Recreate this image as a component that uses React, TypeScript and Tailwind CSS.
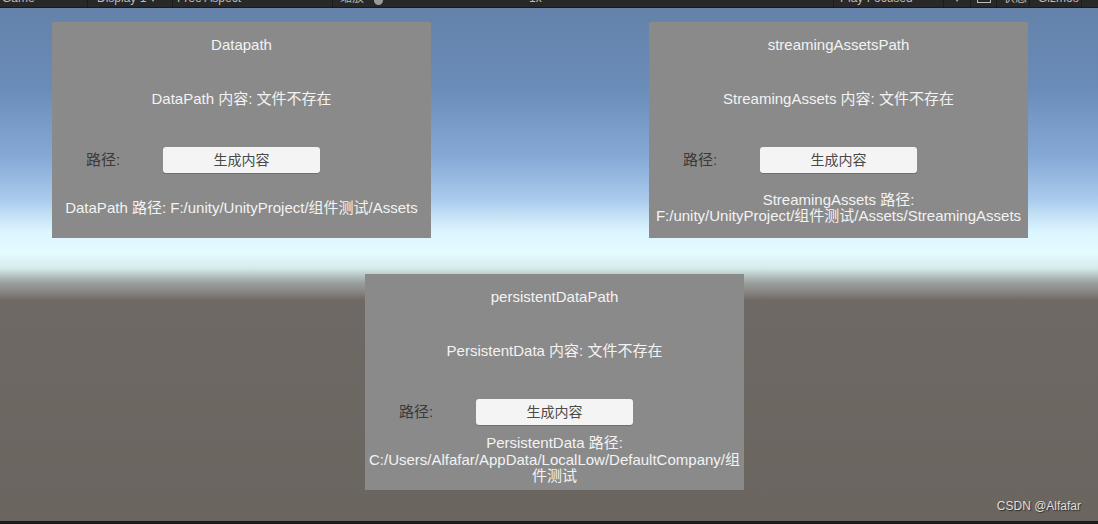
import React from 'react'

interface PathPanel {
  title: string
  content: string
  path: string[]
}

// Path lines are split the way the in-game text box wraps them
const panels: PathPanel[] = [
  {
    title: 'Datapath',
    content: 'DataPath 内容: 文件不存在',
    path: ['DataPath 路径: F:/unity/UnityProject/组件测试/Assets'],
  },
  {
    title: 'streamingAssetsPath',
    content: 'StreamingAssets 内容: 文件不存在',
    path: ['StreamingAssets 路径:', 'F:/unity/UnityProject/组件测试/Assets/StreamingAssets'],
  },
  {
    title: 'persistentDataPath',
    content: 'PersistentData 内容: 文件不存在',
    path: ['PersistentData 路径:', 'C:/Users/Alfafar/AppData/LocalLow/DefaultCompany/组', '件测试'],
  },
]

function Panel({ panel }: { panel: PathPanel }) {
  return (
    <div className="w-[379px] h-[216px] bg-[#8a8a8a] flex flex-col text-[15px] text-[#f3f3f3]">
      <div className="h-[46px] flex items-center justify-center">{panel.title}</div>
      <div className="h-[62px] flex items-center justify-center">{panel.content}</div>
      {/* Label + button row */}
      <div className="mt-[17px] h-[26px] flex items-center">
        <span className="ml-[34px] w-[77px] text-[#3a3a3a]">路径:</span>
        <button className="w-[157px] h-[26px] bg-[#f4f4f4] rounded-[3px] shadow-[0_1px_0_#6f6f6f] text-[#4a4a4a] text-[14px]">
          生成内容
        </button>
      </div>
      <div className="mt-[5px] flex-1 flex flex-col items-center justify-center leading-[16.5px] whitespace-nowrap">
        {panel.path.map((line, i) => (
          <span key={i}>{line}</span>
        ))}
      </div>
    </div>
  )
}

export default function App() {
  return (
    <div className="w-[1098px] h-[524px] flex flex-col overflow-hidden font-['Liberation_Sans','Noto_Sans_CJK_SC',sans-serif]">
      {/* Editor toolbar, mostly cut off */}
      <div className="h-[8px] bg-[#282828] border-b border-[#191919] overflow-hidden flex text-[12px] leading-[12px] text-[#bcbcbc]">
        <div className="w-[88px] border-r border-[#1b1b1b] pl-[2px]"><div className="-mt-[8px]">Game</div></div>
        <div className="w-[85px] border-r border-[#1b1b1b] pl-[9px]"><div className="-mt-[8px]">Display 1 ▾</div></div>
        <div className="w-[160px] border-r border-[#1b1b1b] pl-[4px]"><div className="-mt-[8px]">Free Aspect</div></div>
        <div className="w-[501px] border-r border-[#1b1b1b] pl-[7px] flex">
          <div className="-mt-[8px]">缩放</div>
          <div className="ml-[10px] -mt-[4px] w-[9px] h-[9px] rounded-full bg-[#9a9a9a]" />
          <div className="ml-[146px] -mt-[8px]">1x</div>
        </div>
        <div className="w-[110px] border-r border-[#1b1b1b] pl-[6px]"><div className="-mt-[8px]">Play Focused</div></div>
        <div className="w-[27px] border-r border-[#1b1b1b] pl-[10px]"><div className="-mt-[8px]">▾</div></div>
        <div className="w-[26px] border-r border-[#1b1b1b] flex justify-center">
          <div className="-mt-[6px] w-[14px] h-[9px] border border-[#bcbcbc]" />
        </div>
        <div className="w-[33px] border-r border-[#1b1b1b] pl-[6px]"><div className="-mt-[8px]">状态</div></div>
        <div className="w-[52px] border-r border-[#1b1b1b] pl-[8px]"><div className="-mt-[8px]">Gizmos</div></div>
      </div>

      {/* Game view: skybox with UI panels */}
      <div className="relative flex-1 bg-[linear-gradient(to_bottom,#6482aa_0px,#6a8cb8_80px,#86aad6_150px,#aacbed_192px,#c4e0f5_207px,#dcf6ff_224px,#e4fbff_245px,#d6ecec_260px,#b8c8c6_267px,#9a9f9d_275px,#85827f_285px,#6f6965_292px,#6b6560_100%)]">
        <div className="pt-[14px] pl-[52px] flex gap-[218px]">
          <Panel panel={panels[0]} />
          <Panel panel={panels[1]} />
        </div>
        <div className="mt-[36px] pl-[365px]">
          <Panel panel={panels[2]} />
        </div>
        <span className="absolute right-[17px] bottom-[6px] text-[12px] text-[#dedede] [text-shadow:1px_1px_1px_rgba(0,0,0,0.55)]">
          CSDN @Alfafar
        </span>
      </div>
      <div className="h-[3px] bg-[#1c1c1c]" />
    </div>
  )
}
